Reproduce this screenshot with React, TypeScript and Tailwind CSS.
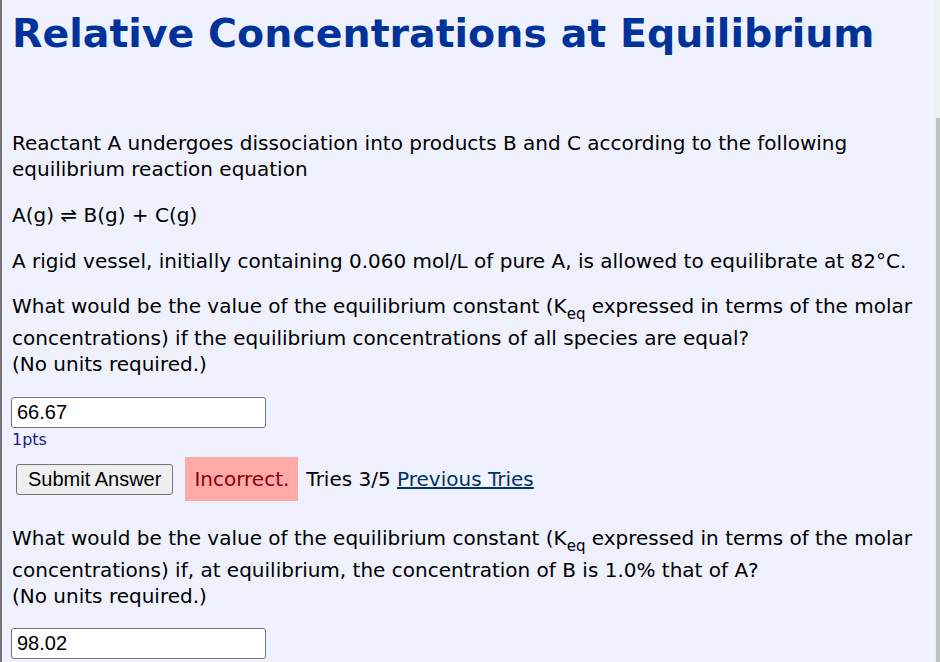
import React from "react";

const body = "font-['DejaVu_Sans',Verdana,sans-serif] text-[20px] leading-[26px] text-black";
const control = "font-['Liberation_Sans',Arial,sans-serif] text-[20px]";

const AnswerInput = ({ value }: { value: string }) => (
  <input
    readOnly
    value={value}
    className={`${control} block h-[31px] w-[255px] -ml-px rounded-[3px] border border-[#767676] bg-white px-[5px] text-black outline-none`}
  />
);

const Keq = () => (
  <>
    K
    <sub className="static align-[-6px] text-[15px] leading-[22px]">eq</sub>
  </>
);

export default function App() {
  return (
    <div className="flex h-[662px] w-[940px] overflow-hidden bg-[#eff2fe]">
      <div className="w-[2px] shrink-0 bg-[#767676]" />
      <main className={`${body} flex-1 pl-[10px]`}>
        <h1 className="pt-[8px] font-['DejaVu_Sans',Verdana,sans-serif] text-[39.5px] font-bold leading-[50px] text-[#003399]">
          Relative Concentrations at Equilibrium
        </h1>

        <p className="mt-[72px]">
          Reactant A undergoes dissociation into products B and C according to the following
          equilibrium reaction equation
        </p>
        <p className="mt-5">A(g) ⇌ B(g) + C(g)</p>
        <p className="mt-5">
          A rigid vessel, initially containing 0.060 mol/L of pure A, is allowed to equilibrate at 82°C.
        </p>

        <p className="mt-[19px]">
          What would be the value of the equilibrium constant (<Keq /> expressed in terms of the molar
          concentrations) if the equilibrium concentrations of all species are equal?
          <br />
          (No units required.)
        </p>
        <div className="mt-[20px]">
          <AnswerInput value="66.67" />
        </div>
        <div className="mt-[2px] text-[16px] leading-[20px] text-[#1c1c8c]">1pts</div>
        <div className="mt-[7px] flex items-center">
          <button
            className={`${control} ml-1 h-[31px] rounded-[3px] border border-[#767676] bg-[#efefef] px-[11px] text-black`}
          >
            Submit Answer
          </button>
          <span className="ml-3 flex h-[44px] items-center bg-[#ffa9a9] px-[9px] text-[#8b0000]">
            Incorrect.
          </span>
          <span className="ml-2">
            Tries 3/5{" "}
            <a href="#" className="text-[#003366] underline">
              Previous Tries
            </a>
          </span>
        </div>

        <p className="mt-[24px]">
          What would be the value of the equilibrium constant (<Keq /> expressed in terms of the molar
          concentrations) if, at equilibrium, the concentration of B is 1.0% that of A?
          <br />
          (No units required.)
        </p>
        <div className="mt-[19px]">
          <AnswerInput value="98.02" />
        </div>
      </main>
      <div className="flex w-[6px] shrink-0 flex-col bg-[#f0f0f0]">
        <div className="h-[118px]" />
        <div className="ml-[2px] flex-1 bg-[#c1c1c1]" />
      </div>
    </div>
  );
}
